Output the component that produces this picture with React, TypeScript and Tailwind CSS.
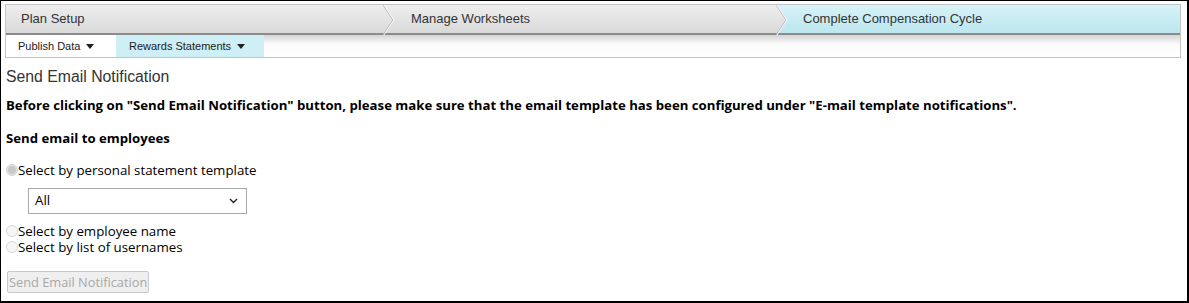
import React from "react";

function Chevron({ className }: { className?: string }) {
  return (
    <svg className={className} width="14" height="30" viewBox="0 0 14 30" fill="none">
      <path d="M2 0 L12 15 L2 30" stroke="#b9b9b9" strokeWidth="1" />
      <path d="M3 0 L13 15 L3 30" stroke="#f7f7f7" strokeWidth="1" />
    </svg>
  );
}

function Caret() {
  return (
    <svg width="8" height="5" viewBox="0 0 8 5" className="ml-[6px] inline-block">
      <path d="M0 0 L8 0 L4 5 Z" fill="#222" />
    </svg>
  );
}

function Radio({ label, checked }: { label: string; checked?: boolean }) {
  return (
    <label className="flex items-center h-[16px]">
      <span
        className={
          checked
            ? "w-[12px] h-[12px] rounded-full border border-[#d4d4d4] bg-[#e4e4e4] flex items-center justify-center"
            : "w-[12px] h-[12px] rounded-full border border-[#d8d8d8] bg-[#f6f6f6]"
        }
      >
        {checked && <span className="w-[8px] h-[8px] rounded-full bg-[#c8c8c8]" />}
      </span>
      <span className="text-[13.3px] leading-[16px] text-black">{label}</span>
    </label>
  );
}

export default function App() {
  return (
    <div className="w-[1189px] h-[303px] bg-white border-t border-l border-r-2 border-b-2 border-black overflow-hidden font-['Open_Sans',sans-serif]">
      <div className="mt-[3px] ml-[4px] mr-[6px] border border-[#c4c4c4] font-['Liberation_Sans',Arial,sans-serif]">
        {/* wizard steps */}
        <div className="flex h-[30px] bg-gradient-to-b from-[#eeeeee] to-[#d9d9d9] border-b-2 border-[#8c8c8c] text-[13px] text-[#333]">
          <div className="relative w-[381px] flex items-center pl-[15px]">
            Plan Setup
            <Chevron className="absolute right-[-8px] top-0" />
          </div>
          <div className="relative w-[390px] flex items-center pl-[24px]">
            Manage Worksheets
          </div>
          <div className="relative flex-1 flex">
            <div className="flex-1 flex items-center pl-[26px] bg-gradient-to-b from-[#d6f3f8] to-[#bde6ee] [clip-path:polygon(0_0,100%_0,100%_100%,0_100%,10px_50%)]">
              Complete Compensation Cycle
            </div>
            <Chevron className="absolute left-[-3px] top-0" />
          </div>
        </div>
        {/* sub tabs */}
        <div className="flex h-[22px] bg-gradient-to-b from-[#d4d4d4] via-[#fbfbfb] via-40% to-white text-[11px] text-[#222]">
          <div className="w-[110px] flex items-center pl-[12px] bg-white">
            Publish Data
            <Caret />
          </div>
          <div className="w-[148px] flex items-center pl-[13px] bg-[#cdeff5]">
            Rewards Statements
            <Caret />
          </div>
        </div>
      </div>

      <div className="pl-[5px]">
        <h1 className="mt-[9px] text-[15.8px] leading-[20px] text-[#333] font-['Liberation_Sans',Arial,sans-serif]">
          Send Email Notification
        </h1>
        <p className="mt-[8px] text-[13.2px] leading-[20px] font-bold text-black">
          Before clicking on "Send Email Notification" button, please make sure that the email template has been configured under "E-mail template notifications".
        </p>
        <p className="mt-[13px] text-[13.2px] leading-[20px] font-bold text-black">Send email to employees</p>

        <div className="mt-[14px]">
          <Radio label="Select by personal statement template" checked />
        </div>
        <div className="mt-[10px] ml-[22px] w-[219px] h-[26px] border border-[#a9a9a9] flex items-center justify-between pl-[6px] pr-[8px] text-[13.3px] text-black">
          <span>All</span>
          <svg width="9" height="6" viewBox="0 0 9 6" fill="none">
            <path d="M1 1 L4.5 4.5 L8 1" stroke="#222" strokeWidth="1.4" />
          </svg>
        </div>
        <div className="mt-[9px] flex flex-col">
          <Radio label="Select by employee name" />
          <Radio label="Select by list of usernames" />
        </div>
        <button
          disabled
          className="mt-[16px] ml-[1px] h-[22px] px-[1px] border border-[#c9c9c9] rounded-[2px] bg-[#efefef] text-[12.8px] text-[#a8a8a8] leading-none"
        >
          Send Email Notification
        </button>
      </div>
    </div>
  );
}
